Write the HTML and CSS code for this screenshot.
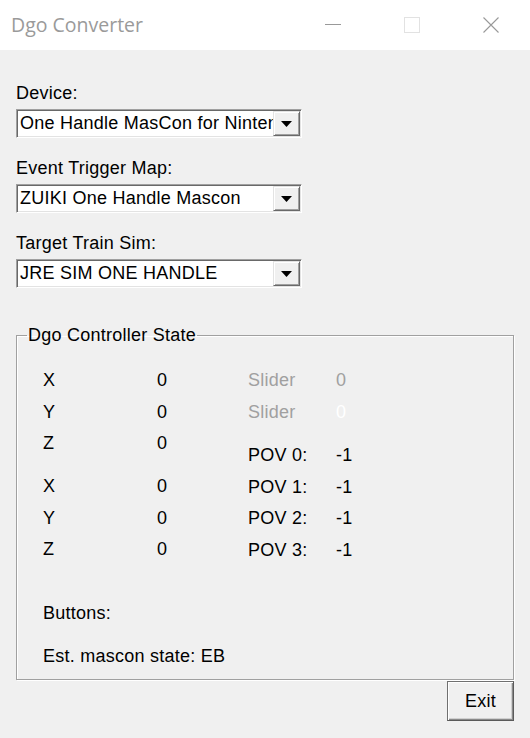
FILE: index.html
```html
<!DOCTYPE html>
<html lang="en">
<head>
<meta charset="utf-8">
<title>Dgo Converter</title>
<link rel="stylesheet" href="styles.css">
</head>
<body>
<div class="window">
  <div class="titlebar">
    <div class="title">Dgo Converter</div>
    <div class="caption-buttons">
      <div class="cap-btn">
        <svg width="16" height="2" viewBox="0 0 16 2"><rect x="0" y="0" width="16" height="1" fill="#999"/></svg>
      </div>
      <div class="cap-btn">
        <svg width="16" height="16" viewBox="0 0 16 16"><rect x="0.5" y="0.5" width="15" height="15" fill="none" stroke="#e2e2e2" stroke-width="1"/></svg>
      </div>
      <div class="cap-btn">
        <svg width="16" height="16" viewBox="0 0 16 16"><path d="M0.5 0.5 L15.5 15.5 M15.5 0.5 L0.5 15.5" stroke="#999" stroke-width="1.1" fill="none"/></svg>
      </div>
    </div>
  </div>

  <div class="content">
    <div class="field">
      <div class="label">Device:</div>
      <div class="combo">
        <div class="combo-text">One Handle MasCon for Nintendo Switch</div>
        <div class="combo-btn"><svg width="11" height="6" viewBox="0 0 11 6"><polygon points="0,0 11,0 5.5,6" fill="#000"/></svg></div>
      </div>
    </div>
    <div class="field">
      <div class="label">Event Trigger Map:</div>
      <div class="combo">
        <div class="combo-text">ZUIKI One Handle Mascon</div>
        <div class="combo-btn"><svg width="11" height="6" viewBox="0 0 11 6"><polygon points="0,0 11,0 5.5,6" fill="#000"/></svg></div>
      </div>
    </div>
    <div class="field">
      <div class="label">Target Train Sim:</div>
      <div class="combo">
        <div class="combo-text">JRE SIM ONE HANDLE</div>
        <div class="combo-btn"><svg width="11" height="6" viewBox="0 0 11 6"><polygon points="0,0 11,0 5.5,6" fill="#000"/></svg></div>
      </div>
    </div>

    <fieldset class="group">
      <legend class="group-title">Dgo Controller State</legend>
      <div class="group-body">
        <div class="state">
          <div class="axes">
            <div class="row"><span class="name">X</span><span class="val">0</span></div>
            <div class="row"><span class="name">Y</span><span class="val">0</span></div>
            <div class="row"><span class="name">Z</span><span class="val">0</span></div>
            <div class="row gap-before"><span class="name">X</span><span class="val">0</span></div>
            <div class="row"><span class="name">Y</span><span class="val">0</span></div>
            <div class="row"><span class="name">Z</span><span class="val">0</span></div>
          </div>
          <div class="povs">
            <div class="row"><span class="name2 disabled">Slider</span><span class="disabled">0</span></div>
            <div class="row"><span class="name2 disabled">Slider</span><span class="white">0</span></div>
            <div class="row gap-before-pov"><span class="name2">POV 0:</span><span>-1</span></div>
            <div class="row"><span class="name2">POV 1:</span><span>-1</span></div>
            <div class="row"><span class="name2">POV 2:</span><span>-1</span></div>
            <div class="row"><span class="name2">POV 3:</span><span>-1</span></div>
          </div>
        </div>
        <div class="buttons-line">Buttons:</div>
        <div class="mascon-line">Est. mascon state: EB</div>
      </div>
    </fieldset>

    <div class="actions">
      <button class="exit-btn" type="button">Exit</button>
    </div>
  </div>
</div>
</body>
</html>
```

FILE: styles.css
```css
html, body {
  margin: 0;
  padding: 0;
}

body {
  width: 530px;
  height: 738px;
  background: #f0f0f0;
  font-family: "Liberation Sans", Arial, sans-serif;
  font-size: 18px;
  letter-spacing: 0.25px;
  color: #000;
  overflow: hidden;
}

.window {
  width: 530px;
  height: 738px;
  display: flex;
  flex-direction: column;
}

.titlebar {
  height: 50px;
  background: #fff;
  display: flex;
  align-items: center;
  justify-content: space-between;
  flex-shrink: 0;
}

.title {
  font-family: "Open Sans", "Noto Sans", sans-serif;
  font-size: 19.5px;
  letter-spacing: 0;
  color: #9a9a9a;
  padding-left: 11px;
  padding-bottom: 1px;
}

.caption-buttons {
  display: flex;
  height: 50px;
}

.cap-btn {
  width: 79px;
  height: 50px;
  display: flex;
  align-items: center;
  justify-content: center;
}

.cap-btn svg {
  display: block;
}

.content {
  padding: 33px 16px 0 16px;
  display: flex;
  flex-direction: column;
}

.field {
  display: flex;
  flex-direction: column;
  margin-bottom: 20px;
}

.label {
  line-height: 20px;
  height: 20px;
  margin-bottom: 6px;
  white-space: nowrap;
}

.combo {
  width: 286px;
  height: 29px;
  box-sizing: border-box;
  background: #fff;
  border: 1px solid;
  border-color: #a0a0a0 #ffffff #ffffff #a0a0a0;
  box-shadow: inset 1px 1px 0 #696969, inset -1px -1px 0 #e3e3e3;
  padding: 1px;
  display: flex;
}

.combo-text {
  flex: 1;
  min-width: 0;
  overflow: hidden;
  white-space: nowrap;
  line-height: 25px;
  padding-left: 2px;
}

.combo-btn {
  width: 27px;
  height: 25px;
  box-sizing: border-box;
  background: #f0f0f0;
  border: 1px solid;
  border-color: #e3e3e3 #696969 #696969 #e3e3e3;
  box-shadow: inset 1px 1px 0 #ffffff, inset -1px -1px 0 #a0a0a0;
  display: flex;
  align-items: center;
  justify-content: center;
  flex-shrink: 0;
}

.combo-btn svg {
  display: block;
}

.group {
  margin: 17px 0 0 0;
  padding: 0;
  width: 498px;
  height: 355px;
  box-sizing: border-box;
  border: 1px solid #a0a0a0;
  box-shadow: inset 1px 1px 0 #fff, 1px 1px 0 #fff;
  min-width: 0;
}

.group-title {
  margin-left: 10px;
  padding: 0 1px;
  line-height: 20px;
  height: 20px;
}

.group-body {
  padding: 25px 0 0 26px;
}

.state {
  display: flex;
}

.axes {
  width: 205px;
}

.row {
  display: flex;
  height: 31.5px;
  line-height: 20px;
  white-space: nowrap;
}

.name {
  width: 114px;
}

.name2 {
  width: 88px;
}

.gap-before {
  margin-top: 11.5px;
}

.gap-before-pov {
  margin-top: 12px;
}

.disabled {
  color: #a0a0a0;
}

.white {
  color: #ffffff;
}

.buttons-line {
  margin-top: 31.5px;
  line-height: 20px;
}

.mascon-line {
  margin-top: 23px;
  line-height: 20px;
}

.actions {
  display: flex;
  justify-content: flex-end;
  margin-top: 1px;
}

.exit-btn {
  width: 67px;
  height: 40px;
  box-sizing: border-box;
  margin: 0;
  padding: 0;
  background: #f0f0f0;
  border: 1px solid;
  border-color: #707070 #5a5a5a #5a5a5a #707070;
  box-shadow: inset 1px 1px 0 #fff, inset -1px -1px 0 #8a8a8a, inset -2px -2px 0 #d0d0d0;
  font-family: "Liberation Sans", Arial, sans-serif;
  font-size: 18px;
  letter-spacing: 0.25px;
  color: #000;
  line-height: 20px;
}
```
